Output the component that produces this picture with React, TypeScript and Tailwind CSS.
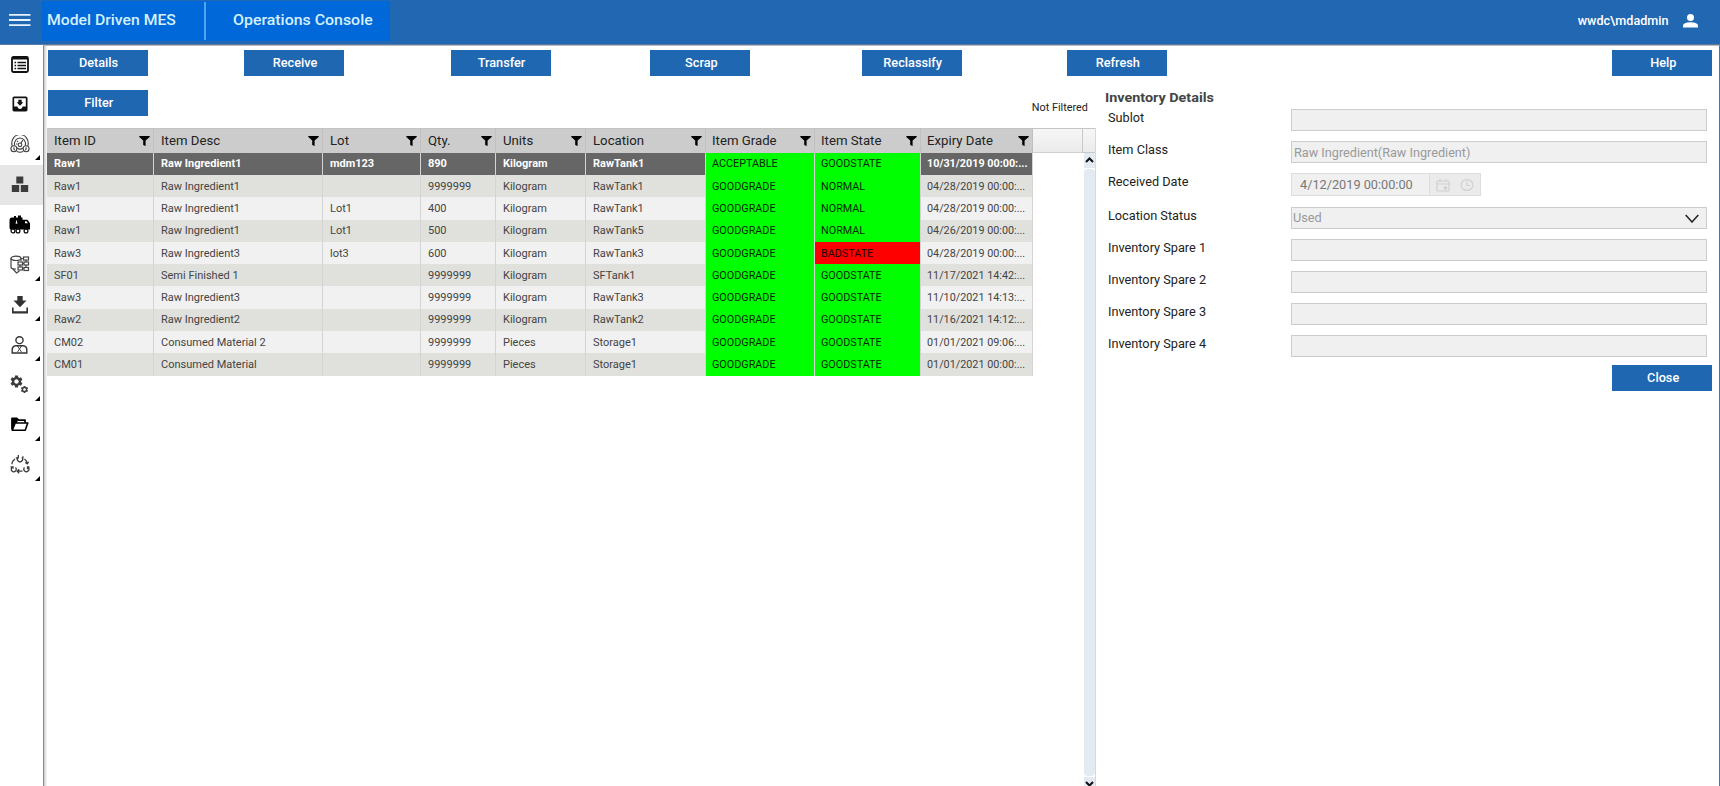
import React from "react";
import { MdMoveToInbox, MdSettings } from "react-icons/md";

const cols = [
  { name: "Item ID", w: "w-[106.5px]" },
  { name: "Item Desc", w: "w-[169px]" },
  { name: "Lot", w: "w-[98.5px]" },
  { name: "Qty.", w: "w-[74.5px]" },
  { name: "Units", w: "w-[90.5px]" },
  { name: "Location", w: "w-[119.5px]" },
  { name: "Item Grade", w: "w-[109px]" },
  { name: "Item State", w: "w-[106px]" },
  { name: "Expiry Date", w: "w-[112px]" },
];

const rows = [
  ["Raw1", "Raw Ingredient1", "mdm123", "890", "Kilogram", "RawTank1", "ACCEPTABLE", "GOODSTATE", "10/31/2019 00:00:..."],
  ["Raw1", "Raw Ingredient1", "", "9999999", "Kilogram", "RawTank1", "GOODGRADE", "NORMAL", "04/28/2019 00:00:..."],
  ["Raw1", "Raw Ingredient1", "Lot1", "400", "Kilogram", "RawTank1", "GOODGRADE", "NORMAL", "04/28/2019 00:00:..."],
  ["Raw1", "Raw Ingredient1", "Lot1", "500", "Kilogram", "RawTank5", "GOODGRADE", "NORMAL", "04/26/2019 00:00:..."],
  ["Raw3", "Raw Ingredient3", "lot3", "600", "Kilogram", "RawTank3", "GOODGRADE", "BADSTATE", "04/28/2019 00:00:..."],
  ["SF01", "Semi Finished 1", "", "9999999", "Kilogram", "SFTank1", "GOODGRADE", "GOODSTATE", "11/17/2021 14:42:..."],
  ["Raw3", "Raw Ingredient3", "", "9999999", "Kilogram", "RawTank3", "GOODGRADE", "GOODSTATE", "11/10/2021 14:13:..."],
  ["Raw2", "Raw Ingredient2", "", "9999999", "Kilogram", "RawTank2", "GOODGRADE", "GOODSTATE", "11/16/2021 14:12:..."],
  ["CM02", "Consumed Material 2", "", "9999999", "Pieces", "Storage1", "GOODGRADE", "GOODSTATE", "01/01/2021 09:06:..."],
  ["CM01", "Consumed Material", "", "9999999", "Pieces", "Storage1", "GOODGRADE", "GOODSTATE", "01/01/2021 00:00:..."],
];

function ListIcon() {
  return (
    <svg width="18" height="17" viewBox="0 0 18 17" fill="none" stroke="#111">
      <rect x="1" y="1" width="16" height="15" rx="1.5" strokeWidth="1.8" />
      <path d="M1 2.2h16" strokeWidth="2.6" />
      <path d="M6.5 6.5H15M6.5 9.5H15M6.5 12.5H15M3.5 6.5h1.6M3.5 9.5h1.6M3.5 12.5h1.6" strokeWidth="1.4" />
    </svg>
  );
}

function GaugeIcon() {
  return (
    <svg width="20" height="18" viewBox="0 0 20 18" fill="none" stroke="#3c3c3c" strokeWidth="1.1">
      <path d="M2.2 10.800A8.200 8.600 0 1 1 17.800 10.800" />
      <path d="M4.700 10.300A5.500 5.800 0 1 1 15.300 10.300" />
      <circle cx="10" cy="9.800" r="1.800" />
      <path d="M10.900 8.300l2-3.300M7 5.800l1 1M6 9h1.400" />
      <circle cx="3.900" cy="13.800" r="3" />
      <circle cx="16.100" cy="13.800" r="3" />
      <path d="M3.900 12.300v2l1 .8M16.100 12.300v2l-1 .8M7 16.500q3 1.400 6 0M7.200 13q2.800 2.200 5.600 0" />
    </svg>
  );
}

function CubesIcon() {
  return (
    <svg width="18" height="17" viewBox="0 0 18 17" fill="#3c3c3c">
      <rect x="5.300" y="0.500" width="7" height="7" />
      <rect x="0.800" y="9" width="7.400" height="7" />
      <rect x="9.800" y="9" width="7.400" height="7" />
    </svg>
  );
}

function TruckIcon() {
  return (
    <svg width="22" height="19" viewBox="0 0 22 19">
      <path d="M3 2.500H5V1h2v1.500h2V.5h3v2h1.500v2.200H18.500l2.500 3.500v6.300H1V13.500H.5V5.500Q.5 2.500 3 2.500z" fill="#000" />
      <path d="M16 6.300h1.600l1.300 2H16z" fill="#fff" />
      <path d="M7.500 5.500v3M6.500 8h2" stroke="#fff" strokeWidth="0.900" />
      <g fill="#fff" stroke="#111" strokeWidth="1.300">
        <circle cx="4" cy="15.900" r="1.900" />
        <circle cx="9" cy="15.900" r="1.900" />
        <circle cx="17" cy="15.900" r="1.900" />
      </g>
    </svg>
  );
}

function DataIcon() {
  return (
    <svg width="20" height="19" viewBox="0 0 20 19" fill="none" stroke="#444" strokeWidth="1.200">
      <ellipse cx="6" cy="3.300" rx="5" ry="2.200" />
      <path d="M1 3.300V12q0 2 4 2h1M11 3.300V6M3 14l3.500 4 3-2" />
      <rect x="13.500" y="2" width="5" height="3" />
      <rect x="8" y="7" width="4.500" height="3" />
      <rect x="14" y="7" width="4.500" height="3" />
      <rect x="8" y="12" width="4.500" height="3" />
      <rect x="14" y="12.500" width="4.500" height="3" />
      <path d="M12.500 8.500H14M12.500 13.500H14M16 5v2M16 10v2.500M10 10v2M13.500 3.500H11" />
    </svg>
  );
}

function DownloadIcon() {
  return (
    <svg width="18" height="18" viewBox="0 0 18 18" fill="#333">
      <path d="M6.300 0h5.400v4.500h3.800L9 11.300 2.500 4.500h3.800z" />
      <path d="M1 11.500h1.600v3.700h12.800v-3.700H17v6H1z" />
    </svg>
  );
}

function OperatorIcon() {
  return (
    <svg width="17" height="18" viewBox="0 0 17 18" fill="none" stroke="#333" strokeWidth="1.400">
      <ellipse cx="8.500" cy="4.200" rx="3.600" ry="3.400" />
      <path d="M1.200 17v-3.500q0-3.300 3.600-3.800h7.400q3.600.5 3.600 3.800V17z" />
      <path d="M6.500 10l4 6M10.500 10l-4 6" strokeWidth="0.900" />
    </svg>
  );
}

function GearsIcon() {
  return (
    <span className="flex h-[18px] w-[18px] items-start text-[#3c3c3c]">
      <MdSettings className="-mt-0.5 -ml-0.5 size-[15px] shrink-0" />
      <MdSettings className="mt-[9px] -ml-[4px] size-[9px] shrink-0" />
    </span>
  );
}

function FolderIcon() {
  return (
    <svg width="18" height="15" viewBox="0 0 18 15">
      <path d="M1 12.500V1.500h5l1.500 1.700h6.500v2.600" fill="none" stroke="#000" strokeWidth="1.800" strokeLinejoin="round" />
      <path d="M1.200 13.300l3-7.300h12.600l-2.600 7.300z" fill="#fff" stroke="#000" strokeWidth="1.600" strokeLinejoin="round" />
      <path d="M1 2v11l3-7h2l1-3-1-1.500z" fill="#000" />
    </svg>
  );
}

function CycleIcon() {
  return (
    <svg width="20" height="19" viewBox="0 0 20 19" fill="none" stroke="#3c3c3c" strokeWidth="1.300">
      <path d="M8 2.300a2.700 2.700 0 1 0 4 0M8.300 0v2.900H5.800M12 3l1.500-1.500" />
      <path d="M2 12.500a2.500 2.500 0 1 0 3.500 0M.5 11.800h2.500v2M14.500 12.500a2.500 2.500 0 1 0 3.800 0M17.500 14.300v-2.400h2" />
      <path d="M5 4Q2 6 2 9.300M14.500 4Q17 6 17.200 8.600M15.300 7.500l1.900 1.400L18.600 6.800M12.500 16.200h-5M9.200 14.200l-2 2 2 2" />
    </svg>
  );
}

const nav = [
  { icon: <ListIcon /> },
  { icon: <MdMoveToInbox className="size-[20px] text-[#111]" /> },
  { icon: <GaugeIcon />, sub: true },
  { icon: <CubesIcon />, active: true },
  { icon: <TruckIcon /> },
  { icon: <DataIcon />, sub: true },
  { icon: <DownloadIcon />, sub: true },
  { icon: <OperatorIcon />, sub: true },
  { icon: <GearsIcon />, sub: true },
  { icon: <FolderIcon />, sub: true },
  { icon: <CycleIcon />, sub: true },
];

function Sidebar() {
  return (
    <nav className="flex w-[43px] shrink-0 flex-col bg-white">
      {nav.map((n, i) => (
        <div key={i} className={`flex h-[40.1px] shrink-0 items-end justify-between ${n.active ? "bg-[#e6e6e6]" : ""}`}>
          <span className="flex h-[38px] w-[39px] items-center justify-center self-start">{n.icon}</span>
          {n.sub && (
            <svg width="5" height="5" viewBox="0 0 5 5" className="mb-[5px] -ml-1 mr-[3px] shrink-0">
              <path d="M5 0v5H0z" fill="#000" />
            </svg>
          )}
        </div>
      ))}
    </nav>
  );
}

function Btn({ label, className = "" }: { label: string; className?: string }) {
  return (
    <button className={`flex h-[26px] w-[100px] shrink-0 items-center justify-center bg-[#2067b2] text-[12px] font-medium text-white ${className}`}>
      <span className="inline-block translate-x-px scale-x-[1.06]">{label}</span>
    </button>
  );
}

function Funnel() {
  return (
    <svg width="11" height="10" viewBox="0 0 11 10" className="shrink-0">
      <path d="M.3 0h10.400v1.100L6.600 4.600V10L4.200 9V4.600L.3 1.100z" fill="#000" />
    </svg>
  );
}

function cellStyle(r: number, c: number, v: string) {
  if (c === 6 || c === 7) return v === "BADSTATE" ? "bg-[#ff0000] text-[#200]" : "bg-[#00ff00] text-[#052805]";
  if (r === 0) return "bg-[#666] font-bold text-white";
  return r % 2 ? "bg-[#e0e1dd] text-[#444]" : "bg-[#f1f1f1] text-[#444]";
}

function Grid() {
  return (
    <div className="mt-[12px] flex min-h-0 flex-1 flex-col border-r border-[#d8d8d8]">
      <div className="flex h-[24.7px] shrink-0 border-t border-[#c4c4c4]">
        {cols.map((c, i) => (
          <div key={c.name} className={`flex items-center justify-between border-r border-[#c0c0c0] bg-[#ccc] pr-[3px] text-[12px] text-[#222] ${i > 5 ? "pl-[6px]" : "pl-[7px]"} ${c.w}`}>
            <span className="inline-block origin-left scale-x-[1.1] whitespace-nowrap">{c.name}</span>
            <Funnel />
          </div>
        ))}
        <div className="flex-1 border-b border-[#d0d0d0] bg-linear-to-b from-[#f6f6f6] to-[#ebebeb]" />
        <div className="w-[13px] border-b border-l border-[#c8c8c8] bg-linear-to-b from-[#f6f6f6] to-[#ebebeb]" />
      </div>
      <div className="flex min-h-0 flex-1">
        <div className="flex-1">
          {rows.map((row, r) => (
            <div key={r} className="flex h-[22.3px]">
              {row.map((v, c) => (
                <div key={c} className={`flex items-center overflow-hidden border-r border-[#d4d4d4] text-[10px] ${c > 5 ? "pl-[6px]" : "pl-[7px]"} ${cols[c].w} ${cellStyle(r, c, v)}`}>
                  <span className={`inline-block origin-left whitespace-nowrap ${c > 5 ? "scale-x-[1.08]" : "scale-x-[1.1]"}`}>{v}</span>
                </div>
              ))}
            </div>
          ))}
        </div>
        <div className="flex w-[12px] flex-col items-center bg-white">
          <div className="flex h-[15px] w-[11px] items-center justify-center bg-[#e3eaf2]">
            <svg width="9" height="6" viewBox="0 0 9 6" fill="none" stroke="#111" strokeWidth="2"><path d="M1 5l3.500-3.500L8 5" /></svg>
          </div>
          <div className="mt-px w-[11px] flex-1 rounded-[4px] bg-[#e3eaf2]" />
          <div className="mt-px flex h-[9px] w-[11px] items-end justify-center overflow-hidden bg-[#e3eaf2]">
            <svg width="9" height="5" viewBox="0 0 9 5" fill="none" stroke="#111" strokeWidth="2"><path d="M1 1l3.500 3.500L8 1" /></svg>
          </div>
        </div>
      </div>
    </div>
  );
}

function Field({ label, h, children }: { label: string; h: string; children?: React.ReactNode }) {
  return (
    <div className={`flex items-start ${h}`}>
      <div className="w-[184px] shrink-0 pl-[1px] text-[12px] leading-[19px] text-[#222]">
        <span className="inline-block origin-left scale-x-[1.06] whitespace-nowrap">{label}</span>
      </div>
      {children ?? <div className="h-[22px] w-[416px] border border-[#ccc] bg-[#f0f0f0]" />}
    </div>
  );
}

function Details() {
  return (
    <section className="flex w-[611px] shrink-0 flex-col pt-[13px] pl-[9px]">
      <h2 className="h-[20px] text-[12.5px] leading-[17px] font-bold text-[#444]">
        <span className="inline-block origin-left scale-x-[1.15]">Inventory Details</span>
      </h2>
      <div className="pl-[2px]">
        <Field label="Sublot" h="h-[32px]" />
        <Field label="Item Class" h="h-[32px]">
          <div className="flex h-[22px] w-[416px] items-center border border-[#ccc] bg-[#f0f0f0] pt-px pl-[2px] text-[12px] text-[#999]">
            <span className="inline-block origin-left scale-x-[1.055]">Raw Ingredient(Raw Ingredient)</span>
          </div>
        </Field>
        <Field label="Received Date" h="h-[34px]">
          <div className="flex h-[23px] w-[190px] border border-[#ddd] bg-[#f0f0f0] text-[12px] text-[#777]">
            <div className="flex w-[138px] items-center border-r border-[#ddd] pl-[8px]">
              <span className="inline-block origin-left scale-x-[1.06]">4/12/2019 00:00:00</span>
            </div>
            <div className="flex flex-1 items-center justify-center gap-[10px] bg-[#ebebeb] pt-px">
              <svg width="14" height="13" viewBox="0 0 14 13" fill="none" stroke="#d0d0d0" strokeWidth="1.200">
                <rect x="1" y="2" width="12" height="10" rx="1" /><path d="M1 5h12M4 0v3M10 0v3" /><rect x="8.500" y="8" width="2" height="2" fill="#d0d0d0" />
              </svg>
              <svg width="14" height="12" viewBox="0 0 14 12" fill="none" stroke="#d0d0d0" strokeWidth="1.200">
                <ellipse cx="7" cy="6" rx="6" ry="5.300" /><path d="M7 2.500V6.500h3" />
              </svg>
            </div>
          </div>
        </Field>
        <Field label="Location Status" h="h-[32px]">
          <div className="flex h-[22px] w-[416px] items-center justify-between border border-[#ccc] bg-[#f0f0f0] pr-[7px] pl-px text-[12px] text-[#999]">
            <span className="inline-block origin-left scale-x-[1.06]">Used</span>
            <svg width="14" height="9" viewBox="0 0 14 9" fill="none" stroke="#222" strokeWidth="1.500"><path d="M.7 1L7 8l6.300-7" /></svg>
          </div>
        </Field>
        <Field label="Inventory Spare 1" h="h-[32px]" />
        <Field label="Inventory Spare 2" h="h-[32px]" />
        <Field label="Inventory Spare 3" h="h-[32px]" />
        <Field label="Inventory Spare 4" h="h-[30px]" />
      </div>
      <Btn label="Close" className="ml-[507px]" />
    </section>
  );
}

export default function App() {
  return (
    <div className="flex h-[786px] w-[1720px] flex-col overflow-hidden bg-white font-['Roboto',sans-serif]">
      <header className="flex h-[45px] shrink-0 items-start border-b border-[#5b7ba0] bg-[#2267b2] text-white">
        <svg width="42" height="40" viewBox="0 0 42 40" stroke="#e8f2ff" strokeWidth="1.800">
          <path d="M9 14.800h21.500M9 20h21.500M9 25.200h21.500" />
        </svg>
        <div className="mt-px flex h-[40px] w-[348px] items-center bg-[#0068d8] pb-px text-[15px] font-medium text-[#d4f0ff]">
          <div className="w-[162px] pl-[5px]"><span className="inline-block origin-left scale-x-[1.05] whitespace-nowrap">Model Driven MES</span></div>
          <div className="h-[38px] w-[2px] bg-[#4fa5ee]" />
          <div className="pl-[27px]"><span className="inline-block origin-left scale-x-[1.06] whitespace-nowrap">Operations Console</span></div>
        </div>
        <div className="ml-auto flex h-[42px] items-center pr-[22px]">
          <span className="inline-block origin-right scale-x-[1.05] text-[12px] font-medium">wwdc\mdadmin</span>
          <svg width="15" height="14" viewBox="0 0 15 14" fill="#fff" className="ml-[15px]">
            <circle cx="7.500" cy="3.600" r="3.500" /><path d="M0 13.500v-1.700Q0 8.300 7.500 8.300T15 11.800v1.700z" />
          </svg>
        </div>
      </header>
      <div className="flex min-h-0 flex-1">
        <Sidebar />
        <main className="flex min-w-0 flex-1 flex-col border-t border-r-[1.500px] border-l border-t-[#bbb] border-r-[#2a7cc8] border-l-[#888]">
          <div className="flex h-full">
            <div className="w-[3px] shrink-0 bg-linear-to-r from-[#ccc] to-[#fafafa]" />
            <div className="flex min-w-0 flex-1 flex-col">
              <div className="flex shrink-0 pt-[4px] pl-px">
                <Btn label="Details" />
                <Btn label="Receive" className="ml-[96px]" />
                <Btn label="Transfer" className="ml-[107px]" />
                <Btn label="Scrap" className="ml-[99px]" />
                <Btn label="Reclassify" className="ml-[112px]" />
                <Btn label="Refresh" className="ml-[105px]" />
                <Btn label="Help" className="ml-[445px]" />
              </div>
              <div className="flex min-h-0 flex-1">
                <div className="flex w-[1049px] shrink-0 flex-col">
                  <div className="flex items-start justify-between pt-[14px] pr-[8px] pl-px">
                    <Btn label="Filter" />
                    <span className="mt-[10px] inline-block origin-right scale-x-[1.08] text-[10px] text-[#222]">Not Filtered</span>
                  </div>
                  <Grid />
                </div>
                <Details />
              </div>
            </div>
          </div>
        </main>
      </div>
    </div>
  );
}
